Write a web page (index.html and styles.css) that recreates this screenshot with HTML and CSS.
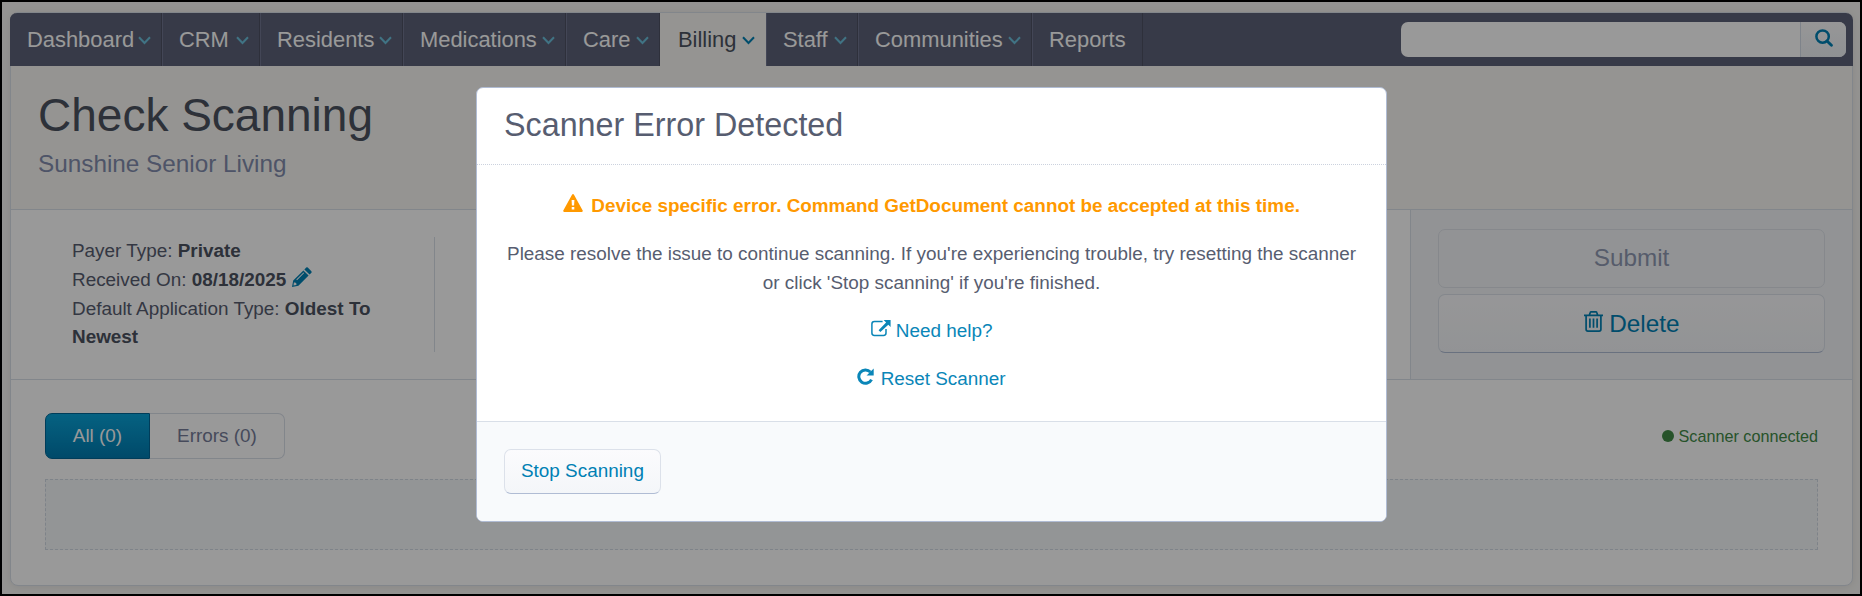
FILE: index.html
```
<!DOCTYPE html>
<html lang="en">
<head>
  <meta charset="utf-8">
  <title>Check Scanning</title>
  <link rel="stylesheet" href="styles.css">
</head>
<body>

  <!-- Shared chevron for the nav -->
  <svg width="0" height="0" class="defs">
    <symbol id="chevron" viewBox="0 0 13 9">
      <path d="M1 1.3 L6.5 7 L12 1.3" fill="none" stroke="currentColor" stroke-width="2"/>
    </symbol>
  </svg>

  <div class="page">
    <!-- Nav -->
    <nav class="nav">
      <ul class="menu">
        <li>Dashboard <svg class="chev"><use href="#chevron"/></svg></li>
        <li>CRM <svg class="chev"><use href="#chevron"/></svg></li>
        <li>Residents <svg class="chev"><use href="#chevron"/></svg></li>
        <li>Medications <svg class="chev"><use href="#chevron"/></svg></li>
        <li>Care <svg class="chev"><use href="#chevron"/></svg></li>
        <li class="active">Billing <svg class="chev"><use href="#chevron"/></svg></li>
        <li>Staff <svg class="chev"><use href="#chevron"/></svg></li>
        <li>Communities <svg class="chev"><use href="#chevron"/></svg></li>
        <li>Reports</li>
      </ul>
      <form class="search">
        <input type="text" aria-label="Search">
        <button type="button" aria-label="Search">
          <svg width="18" height="18" viewBox="0 0 18 18" fill="none" stroke="currentColor">
            <circle cx="7.6" cy="7.6" r="6.2" stroke-width="2.5"/>
            <path d="M12 12 L16.4 16.2" stroke-width="2.9" stroke-linecap="round"/>
          </svg>
        </button>
      </form>
    </nav>

    <!-- Title -->
    <header class="header">
      <h1>Check Scanning</h1>
      <h2>Sunshine Senior Living</h2>
    </header>

    <!-- Batch details -->
    <section class="details">
      <div class="info">
        <div>Payer Type: <b>Private</b></div>
        <div>Received On: <b>08/18/2025</b>
          <svg class="pencil" width="20" height="20" viewBox="0 0 20 20">
            <path fill="currentColor" fill-rule="evenodd" d="M0 20 L1.2 13.6 L11.4 3.4 L16.6 8.6 L6.4 18.8 Z M1.9 15.6 L1.5 18.4 L4.4 18 L4.4 16.4 L3.2 15.4 Z M4.3 12.6 L5 13.3 L12.2 6.1 L11.5 5.4 Z"/>
            <path fill="currentColor" d="M12.4 2.4 L14.2 0.6 Q15 0 15.8 0.6 L19.4 4.2 Q20 5 19.4 5.8 L17.6 7.6 Z"/>
          </svg>
        </div>
        <div>Default Application Type: <b>Oldest To Newest</b></div>
      </div>
      <div class="actions">
        <button class="btn big disabled" disabled>Submit</button>
        <button class="btn big">
          <svg width="19" height="21" viewBox="0 0 19 21" fill="none" stroke="currentColor" stroke-width="1.7">
            <path d="M0 4.3 H19 M5.4 4 L6.2 1.6 Q6.4 0.9 7.2 0.9 H11.8 Q12.6 0.9 12.8 1.6 L13.6 4 M2.1 4.5 V18.3 Q2.1 20.1 3.9 20.1 H15.1 Q16.9 20.1 16.9 18.3 V4.5"/>
            <path d="M5.9 7.6 V16.8 M9.5 7.6 V16.8 M13.1 7.6 V16.8"/>
          </svg>
          Delete
        </button>
      </div>
    </section>

    <!-- Checks -->
    <section class="checks">
      <div class="toolbar">
        <div class="tabs">
          <a class="tab on">All (0)</a>
          <a class="tab">Errors (0)</a>
        </div>
        <div class="status"><span class="dot"></span>Scanner connected</div>
      </div>
      <div class="dropzone"></div>
    </section>
  </div>

  <!-- Scanner error dialog -->
  <div class="overlay">
    <div class="modal">
      <div class="modal-title">Scanner Error Detected</div>
      <div class="modal-body">
        <p class="alert">
          <svg width="20" height="18" viewBox="0 0 20 18">
            <path fill="currentColor" fill-rule="evenodd" d="M9 0.7 Q10 -0.6 11 0.7 L19.7 16.4 Q20.3 17.8 18.8 18 H1.2 Q-0.3 17.8 0.3 16.4 Z M8.6 6 L8.9 11.6 H11.1 L11.4 6 Z M8.7 13 V15.4 H11.3 V13 Z"/>
          </svg>
          Device specific error. Command GetDocument cannot be accepted at this time.
        </p>
        <p>Please resolve the issue to continue scanning. If you're experiencing trouble, try resetting the scanner or click 'Stop scanning' if you're finished.</p>
        <p><a class="link help">
          <svg width="20" height="18" viewBox="0 0 20 18">
            <path fill="none" stroke="currentColor" stroke-width="1.5" d="M11.6 2.6 H3.4 Q0.9 2.6 0.9 5 V14 Q0.9 16.4 3.4 16.4 H12.6 Q15 16.4 15 14 V10"/>
            <path fill="currentColor" d="M12.6 1 H19.6 V8 L17.3 5.7 L9.4 13 L7.6 11.3 L15.1 3.5 Z"/>
          </svg>
          Need help?</a></p>
        <p><a class="link reset">
          <svg width="17" height="17" viewBox="0 0 17 17">
            <path fill="none" stroke="currentColor" stroke-width="3" d="M13.4 4 A6.7 6.7 0 1 0 14.5 11.6"/>
            <path fill="currentColor" d="M16.7 0.4 V7.4 H9.6 Z"/>
          </svg>
          Reset Scanner</a></p>
      </div>
      <div class="modal-footer">
        <button class="btn">Stop Scanning</button>
      </div>
    </div>
  </div>

</body>
</html>
```
FILE: styles.css
```
* {
  box-sizing: border-box;
}
body {
  position: relative;
  margin: 0;
  width: 1862px;
  height: 596px;
  padding: 10px 7px 8px 8px;
  border: 2px solid #000;
  background: #f7f6f3;
  color: #575d70;
  font-family: "Liberation Sans", Arial, sans-serif;
  font-size: 18.9px;
  line-height: 28.8px;
  overflow: hidden;
}
.defs {
  position: absolute;
}
.page {
  display: flex;
  flex-direction: column;
  height: 574px;
  border: 1px solid #d9dfe8;
  border-radius: 8px;
  background: #fff;
  box-shadow: 0 1px 8px rgba(0, 0, 0, 0.08);
}

/* nav */
.nav {
  display: flex;
  justify-content: space-between;
  align-items: center;
  height: 53px;
  margin: 0 -1px;
  padding-right: 7px;
  border-radius: 7px 7px 0 0;
  background: #5d6278;
  color: #fff;
  font-size: 21.9px;
}
.menu {
  display: grid;
  grid-template-columns: 152px 98px 143px 163px 94px 106px 92px 174px 111px;
  height: 100%;
  margin: 0;
  padding: 0;
  list-style: none;
}
.menu li {
  display: flex;
  justify-content: space-between;
  align-items: center;
  padding: 2px 10px 0 16px;
  border-left: 1px solid #71768f;
  border-right: 1px solid #4d5163;
  white-space: nowrap;
}
.menu li:first-child {
  border-left-color: #5d6278;
  border-radius: 7px 0 0 0;
}
.menu li.active {
  padding-left: 17px;
  border-color: #f9f7f3;
  background: #f9f7f3;
  color: #4b525f;
}
.chev {
  width: 13px;
  height: 9px;
  color: #6cc0dd;
}
.active .chev {
  color: #0080b4;
}
.search {
  display: flex;
  width: 445px;
  height: 35px;
  border-radius: 7px;
  background: #fff;
  overflow: hidden;
}
.search input {
  flex: 1;
  border: 0;
  background: none;
}
.search button {
  width: 46px;
  padding: 0 0 4px;
  border: 0;
  border-left: 1px solid #d3dbe6;
  background: linear-gradient(#fbfbfc, #eff2f6);
  color: #0080b4;
}
.search svg {
  display: block;
  margin: 0 auto;
}

/* title */
.header {
  height: 144px;
  padding: 22px 27px 0;
  border-bottom: 1px solid #d9dfe8;
  background: #f9f7f3;
}
h1, h2 {
  margin: 0;
  font-weight: normal;
}
h1 {
  color: #4b525f;
  font-size: 46px;
  line-height: 54px;
}
h2 {
  margin-top: 8px;
  color: #828cad;
  font-size: 24.3px;
  line-height: 28px;
}

/* details */
.details {
  display: flex;
  justify-content: space-between;
  height: 170px;
  border-bottom: 1px solid #d9dfe8;
}
.info {
  width: 363px;
  height: 115px;
  margin: 27px 0 0 61px;
  padding-right: 50px;
  border-right: 1px solid #d9dfe8;
}
.info b {
  color: #4b525f;
}
.pencil {
  color: #0080b4;
  vertical-align: -1px;
}
.actions {
  display: flex;
  flex-direction: column;
  gap: 6px;
  width: 442px;
  padding: 19px 27px 0;
  border-left: 1px solid #d9dfe8;
  background: #f4f6f9;
}
.btn {
  height: 45px;
  padding: 0 16px 2px;
  border: 1px solid #dce1ea;
  border-bottom-color: #b0bcd4;
  border-radius: 7px;
  background: linear-gradient(#fbfbfd, #f4f6f9);
  color: #0080b4;
  font: 18.9px "Liberation Sans", Arial, sans-serif;
}
.btn.big {
  height: 59px;
  padding-bottom: 0;
  font-size: 24.3px;
}
.btn.disabled {
  padding-bottom: 1px;
  border-color: #dfe3ea;
  background: none;
  color: #9099b3;
}

/* checks */
.checks {
  padding: 33px 34px 0;
}
.toolbar {
  display: flex;
  justify-content: space-between;
  align-items: center;
  height: 46px;
}
.tabs {
  display: flex;
  height: 46px;
}
.tab {
  width: 135px;
  border: 1px solid #d9dfe8;
  border-left: 0;
  border-radius: 0 7px 7px 0;
  color: #757c98;
  line-height: 44px;
  text-align: center;
}
.tab.on {
  width: 105px;
  border: 1px solid #006796;
  border-radius: 7px 0 0 7px;
  background: linear-gradient(#0aa3d8, #007bb0);
  color: #fff;
}
.status {
  display: flex;
  align-items: center;
  gap: 5px;
  color: #418a47;
  font-size: 16.2px;
}
.dot {
  width: 12px;
  height: 12px;
  border-radius: 50%;
  background: #418a47;
}
.dropzone {
  height: 71px;
  margin-top: 20px;
  border: 1px dashed #d3dae4;
  background: #f5f8fb;
}

/* dialog */
.overlay {
  position: absolute;
  top: 0;
  left: 0;
  width: 100%;
  height: 100%;
  padding-top: 85px;
  background: rgba(0, 0, 0, 0.4);
}
.modal {
  width: 911px;
  height: 435px;
  margin-left: 474px;
  border: 1px solid #b0bcd4;
  border-radius: 7px;
  background: #fff;
  overflow: hidden;
}
.modal-title {
  height: 77px;
  padding-left: 27px;
  border-bottom: 1px dotted #ccd2de;
  font-size: 32.3px;
  line-height: 75px;
}
.modal-body {
  height: 256px;
  padding: 27px 27px 0;
  text-align: center;
}
.modal-body p {
  margin: 0 0 19.4px;
}
.alert {
  color: #ff9900;
  font-weight: bold;
}
.alert svg {
  margin-right: 3px;
}
.link {
  color: #0a86b8;
}
.reset svg {
  margin-right: 1px;
}
.modal-footer {
  height: 101px;
  padding: 27px;
  border-top: 1px solid #d9dfe8;
  background: #f8fafc;
}
```
